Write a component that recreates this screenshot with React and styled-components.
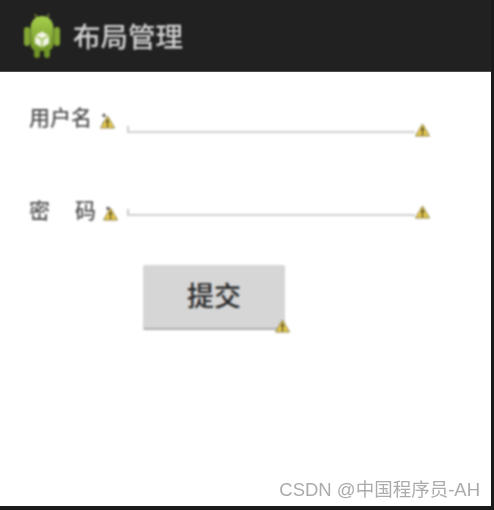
import React from "react";
import styled, { createGlobalStyle } from "styled-components";

const Global = createGlobalStyle`
  html, body {
    margin: 0;
    padding: 0;
    background: #fff;
  }
  * {
    box-sizing: border-box;
  }
`;

const Frame = styled.div`
  width: 494px;
  height: 510px;
  background: #1a1a1a;
  padding: 0 3px 4px 0;
  overflow: hidden;
  font-family: "Noto Sans CJK SC", "Liberation Sans", sans-serif;
`;

const Screen = styled.div`
  position: relative;
  height: 100%;
  background: #fff;
  display: flex;
  flex-direction: column;
`;

const ActionBar = styled.header`
  height: 72px;
  flex: none;
  background: #212121;
  border-bottom: 1px solid #4a4a4a;
  display: flex;
  align-items: center;
  gap: 12px;
  padding: 0 0 0 23px;
`;

const Logo = styled.svg`
  width: 38px;
  height: 46px;
  filter: blur(0.8px);
`;

const Title = styled.h1`
  margin: 0;
  font-size: 27.5px;
  font-weight: 500;
  color: #d4d4d4;
  line-height: 1;
  filter: blur(0.8px);
`;

const Form = styled.main`
  flex: 1;
  display: flex;
  flex-direction: column;
  padding-top: 32px;
  filter: blur(0.8px);
`;

const Row = styled.div`
  position: relative;
  display: flex;
  align-items: flex-start;
  height: 82px;
  padding-left: 29px;
`;

const Label = styled.span`
  width: 98px;
  flex: none;
  margin-top: ${(p) => p.$top}px;
  font-size: 21px;
  font-weight: 500;
  line-height: 28px;
  color: #505050;
  white-space: nowrap;
`;

const Gap = styled.span`
  display: inline-block;
  width: 25px;
`;

const Colon = styled.span`
  display: inline-block;
  margin-left: 9px;
  font-size: 20px;
`;

const Field = styled.div`
  width: 288px;
  height: 7px;
  margin-top: ${(p) => p.$top}px;
  border-left: 2px solid #c8c8c8;
  border-bottom: 2px solid #d0d0d0;
`;

const Submit = styled.button`
  position: relative;
  display: block;
  align-self: flex-start;
  width: 142px;
  height: 65px;
  margin: -3px 0 0 143px;
  padding: 0 0 4px;
  border: 0;
  border-bottom: 2px solid #adadad;
  border-radius: 2px;
  background: #d6d6d6;
  font-family: inherit;
  font-size: 27px;
  font-weight: 500;
  line-height: 1;
  color: #282828;
`;

const Marker = styled.svg`
  position: absolute;
  left: ${(p) => p.$x}px;
  top: ${(p) => p.$y}px;
  width: 15px;
  height: 14px;
`;

const Watermark = styled.span`
  position: absolute;
  right: 11px;
  bottom: 5px;
  font-size: 18.5px;
  line-height: 22px;
  color: #ababab;
  font-family: "Liberation Sans", "Noto Sans CJK SC", sans-serif;
`;

const Warning = ({ x, y }) => (
  <Marker $x={x} $y={y} viewBox="0 0 15 14">
    <path d="M7.5 1 L14.5 13 H0.5 Z" fill="#e8c94a" stroke="#8d8450" strokeWidth="1" strokeLinejoin="round" />
    <path d="M6.6 4.5 H8.4 V9 H6.6 Z M6.6 10 H8.4 V11.8 H6.6 Z" fill="#3a3320" />
  </Marker>
);

const AndroidLogo = () => (
  <Logo viewBox="0 0 38 46">
    <defs>
      <linearGradient id="droid" x1="0" y1="0" x2="0" y2="1">
        <stop offset="0" stopColor="#a8d04c" />
        <stop offset="1" stopColor="#6f9427" />
      </linearGradient>
    </defs>
    <path d="M12 1 L14 5 M26 1 L24 5" stroke="#7d9a38" strokeWidth="1.5" />
    <rect x="1" y="14" width="6" height="19" rx="3" fill="#83a833" />
    <rect x="31" y="14" width="6" height="19" rx="3" fill="#83a833" />
    <rect x="11" y="33" width="6" height="12" rx="3" fill="#6f9427" />
    <rect x="21" y="33" width="6" height="12" rx="3" fill="#6f9427" />
    <path d="M7.5 16 C7.5 7 13 3 19 3 C25 3 30.5 7 30.5 16 V30 Q30.5 38 23 38 H15 Q7.5 38 7.5 30 Z" fill="url(#droid)" />
    <path d="M19 18.5 L26 22.5 V30.5 L19 34.5 L12 30.5 V22.5 Z" fill="#f1f4e6" />
    <path d="M12 22.5 L19 26.5 L26 22.5 M19 26.5 V34.5" stroke="#8fb83a" strokeWidth="1.4" fill="none" />
  </Logo>
);

const App = () => {
  return (
    <>
      <Global />
      <Frame>
        <Screen>
          <ActionBar>
            <AndroidLogo />
            <Title>布局管理</Title>
          </ActionBar>
          <Form>
            <Row>
              <Label $top={-2}>
                用户名<Colon>:</Colon>
              </Label>
              <Field $top={22} />
              <Warning x={100} y={11} />
              <Warning x={415} y={19} />
            </Row>
            <Row>
              <Label $top={9}>
                密<Gap />码<Colon>:</Colon>
              </Label>
              <Field $top={23} />
              <Warning x={103} y={21} />
              <Warning x={415} y={19} />
            </Row>
            <Submit>
              提交
              <Warning x={132} y={54} />
            </Submit>
          </Form>
          <Watermark>CSDN @中国程序员-AH</Watermark>
        </Screen>
      </Frame>
    </>
  );
};

export default App;
